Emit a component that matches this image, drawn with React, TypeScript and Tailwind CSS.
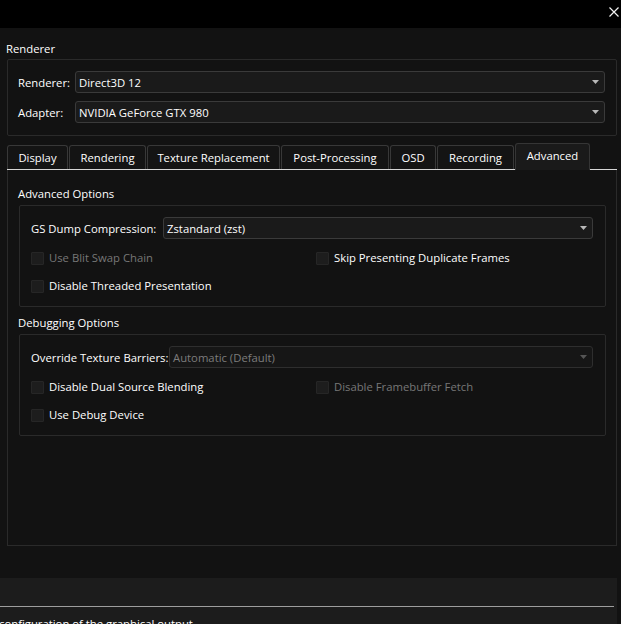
import React from "react";

function Arrow({ disabled }: { disabled?: boolean }) {
  return (
    <svg width="7" height="4" viewBox="0 0 7 4" className="shrink-0">
      <path d="M0 0H7L3.5 4Z" fill={disabled ? "#555555" : "#b8b8b8"} />
    </svg>
  );
}

function Combo({ value, disabled }: { value: string; disabled?: boolean }) {
  return (
    <div
      className={
        disabled
          ? "flex-1 h-[22px] rounded-[3px] border border-[#2e2e2e] bg-[#161616] text-[#7c7c7c] flex items-center pl-[3px] pr-[5px]"
          : "flex-1 h-[22px] rounded-[3px] border border-[#3a3a3a] bg-[#1a1a1a] text-white flex items-center pl-[3px] pr-[5px]"
      }
    >
      <span className="flex-1 pt-[1px] whitespace-nowrap">{value}</span>
      <Arrow disabled={disabled} />
    </div>
  );
}

function Check({ label, disabled }: { label: string; disabled?: boolean }) {
  return (
    <div className="flex items-center h-[28px]">
      <div className="w-[13px] h-[13px] shrink-0 bg-[#1d1d1d] border border-[#262626] rounded-[1px]" />
      <span className={disabled ? "ml-[5px] mb-[2px] text-[#777777] whitespace-nowrap" : "ml-[5px] mb-[2px] text-white whitespace-nowrap"}>
        {label}
      </span>
    </div>
  );
}

const tabs: { name: string; w: string; active?: boolean }[] = [
  { name: "Display", w: "w-[61px]" },
  { name: "Rendering", w: "w-[77px]" },
  { name: "Texture Replacement", w: "w-[133px]" },
  { name: "Post-Processing", w: "w-[108px]" },
  { name: "OSD", w: "w-[46px]" },
  { name: "Recording", w: "w-[77px]" },
  { name: "Advanced", w: "w-[75px]", active: true },
];

export default function App() {
  return (
    <div className="w-[621px] h-[624px] overflow-hidden bg-[#121212] font-['Open_Sans','Liberation_Sans',sans-serif] text-[11.3px] leading-[15px] text-white">
      {/* title bar */}
      <div className="h-[28px] bg-black flex justify-end items-start pt-[7px] pr-[2px]">
        <svg width="10" height="10" viewBox="0 0 10 10">
          <path d="M0.5 0.5L9.5 9.5M9.5 0.5L0.5 9.5" stroke="#f2f2f2" strokeWidth="1.2" />
        </svg>
      </div>

      <div className="pl-[7px] pr-[4px]">
        <div className="h-[31px] pt-[13px] -ml-[1px]">Renderer</div>
        <div className="border border-[#2a2a2a] rounded-[2px] pt-[11px] pb-[12px] pl-[10px] pr-[11px] flex flex-col gap-[8px]">
          <div className="flex items-center h-[22px]">
            <span className="w-[57px] shrink-0 pt-[1px]">Renderer:</span>
            <Combo value="Direct3D 12" />
          </div>
          <div className="flex items-center h-[22px]">
            <span className="w-[57px] shrink-0 pt-[1px]">Adapter:</span>
            <Combo value="NVIDIA GeForce GTX 980" />
          </div>
        </div>

        {/* tabs */}
        <div className="mt-[7px] h-[27px] flex items-end gap-[1px] border-b border-[#d6d6d6]">
          {tabs.map((t) =>
            t.active ? (
              <div
                key={t.name}
                className={`${t.w} h-[27px] -mb-[1px] pb-[3px] relative bg-[#1a1a1a] border-t border-x border-[#353535] rounded-t-[3px] flex items-center justify-center whitespace-nowrap`}
              >
                {t.name}
              </div>
            ) : (
              <div
                key={t.name}
                className={`${t.w} h-[24px] pb-[1px] bg-[#141414] border-t border-x border-[#383838] rounded-t-[3px] flex items-center justify-center whitespace-nowrap`}
              >
                {t.name}
              </div>
            )
          )}
        </div>

        {/* tab panel */}
        <div className="h-[376px] border-x border-b border-[#2a2a2a] pl-[11px] pr-[10px]">
          <div className="pt-[16px] mb-[4px] -ml-[1px]">Advanced Options</div>
          <div className="border border-[#2a2a2a] rounded-[2px] pt-[11px] pb-[6px] pl-[11px] pr-[12px]">
            <div className="flex items-center h-[22px]">
              <span className="w-[132px] shrink-0 pt-[1px] whitespace-nowrap">GS Dump Compression:</span>
              <Combo value="Zstandard (zst)" />
            </div>
            <div className="mt-[5px] grid grid-cols-[285px_1fr]">
              <Check label="Use Blit Swap Chain" disabled />
              <Check label="Skip Presenting Duplicate Frames" />
              <Check label="Disable Threaded Presentation" />
              <div />
            </div>
          </div>

          <div className="pt-[8px] mb-[4px] -ml-[1px]">Debugging Options</div>
          <div className="border border-[#2a2a2a] rounded-[2px] pt-[11px] pb-[6px] pl-[11px] pr-[12px]">
            <div className="flex items-center h-[22px]">
              <span className="w-[138px] shrink-0 pt-[1px] whitespace-nowrap">Override Texture Barriers:</span>
              <Combo value="Automatic (Default)" disabled />
            </div>
            <div className="mt-[5px] grid grid-cols-[285px_1fr]">
              <Check label="Disable Dual Source Blending" />
              <Check label="Disable Framebuffer Fetch" disabled />
              <Check label="Use Debug Device" />
              <div />
            </div>
          </div>
        </div>
      </div>

      {/* bottom description panel */}
      <div className="mt-[32px] w-[617px] h-[46px] overflow-hidden bg-[#1c1c1c] pt-[28px]">
        <div className="w-[614px] h-px bg-[#9d9d9d]" />
        <div className="pt-[9px] -ml-[1px] whitespace-nowrap">configuration of the graphical output</div>
      </div>
    </div>
  );
}
